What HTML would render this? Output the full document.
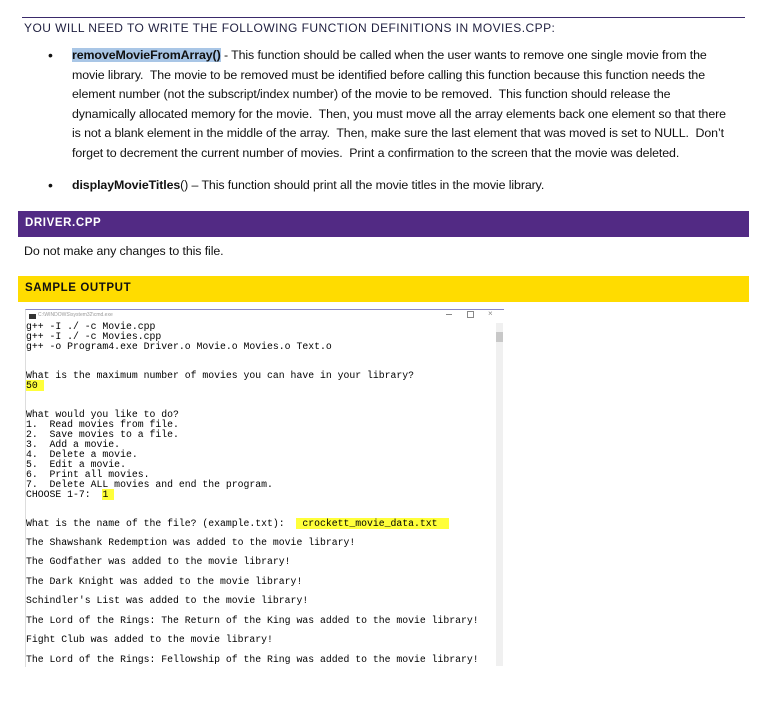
<!DOCTYPE html>
<html><head><style>
body{margin:0;background:#fff;width:777px;height:708px;position:relative;font-family:"Liberation Sans",sans-serif;color:#111;overflow:hidden}
.a{position:absolute;white-space:nowrap}
.t{font-size:12.4px;letter-spacing:-0.1px}
.m{font-family:"Liberation Mono",monospace;font-size:9.8px;color:#000;position:absolute;left:26px;white-space:pre;line-height:10px}
.hl{background:#ffff3a}
</style></head><body>
<div class="a" style="left:22px;top:17px;width:723px;height:1px;background:#3a2a6a"></div>
<div class="a" style="left:24px;top:21px;font-size:12px;letter-spacing:0.45px;color:#1f1f3f;">YOU WILL NEED TO WRITE THE FOLLOWING FUNCTION DEFINITIONS IN MOVIES.CPP:</div>
<div class="a" style="left:48px;top:47px;font-size:14px">•</div>
<div class="a t" style="left:72px;top:46px;line-height:19.6px"><b style="background:#a9c6e6">removeMovieFromArray()</b> - This function should be called when the user wants to remove one single movie from the<br>movie library.&nbsp; The movie to be removed must be identified before calling this function because this function needs the<br>element number (not the subscript/index number) of the movie to be removed.&nbsp; This function should release the<br>dynamically allocated memory for the movie.&nbsp; Then, you must move all the array elements back one element so that there<br>is not a blank element in the middle of the array.&nbsp; Then, make sure the last element that was moved is set to NULL.&nbsp; Don’t<br>forget to decrement the current number of movies.&nbsp; Print a confirmation to the screen that the movie was deleted.</div>
<div class="a" style="left:48px;top:177px;font-size:14px">•</div>
<div class="a t" style="left:72px;top:178px"><b>displayMovieTitles</b>() – This function should print all the movie titles in the movie library.</div>
<div class="a" style="left:18px;top:211px;width:731px;height:26px;background:#522a84"></div>
<div class="a" style="left:25px;top:217px;font-size:11.5px;font-weight:bold;color:#fff;letter-spacing:0.6px">DRIVER.CPP</div>
<div class="a t" style="left:24px;top:244px">Do not make any changes to this file.</div>
<div class="a" style="left:18px;top:276px;width:731px;height:26px;background:#ffdc00"></div>
<div class="a" style="left:25px;top:282px;font-size:11.5px;font-weight:bold;color:#111;letter-spacing:0.6px">SAMPLE OUTPUT</div>
<div class="a" style="left:25px;top:309px;width:478px;height:357px;border-top:1px solid #8a86c8;border-left:1px solid #ddd;background:#fff"></div>
<div class="a" style="left:29px;top:314px;width:7px;height:5px;background:#333"></div>
<div class="a" style="left:38px;top:312px;font-size:5px;color:#999">C:\WINDOWS\system32\cmd.exe</div>
<div class="a" style="left:446px;top:314px;width:6px;height:1px;background:#888"></div>
<div class="a" style="left:467px;top:311px;width:5px;height:5px;border:1px solid #888"></div>
<div class="a" style="left:488px;top:309px;font-size:8px;color:#888">×</div>
<div class="a" style="left:496px;top:323px;width:7px;height:343px;background:#f0f0f0"></div>
<div class="a" style="left:496px;top:332px;width:7px;height:10px;background:#c8c8c8"></div>
<div class="m" style="top:322px">g++ -I ./ -c Movie.cpp
g++ -I ./ -c Movies.cpp
g++ -o Program4.exe Driver.o Movie.o Movies.o Text.o</div>
<div class="m" style="top:371px">What is the maximum number of movies you can have in your library?
<span class="hl">50 </span></div>
<div class="m" style="top:410px">What would you like to do?
1.  Read movies from file.
2.  Save movies to a file.
3.  Add a movie.
4.  Delete a movie.
5.  Edit a movie.
6.  Print all movies.
7.  Delete ALL movies and end the program.
CHOOSE 1-7:  <span class="hl">1 </span></div>
<div class="m" style="top:519px">What is the name of the file? (example.txt):  <span class="hl"> crockett_movie_data.txt  </span></div>
<div class="m" style="top:538px">The Shawshank Redemption was added to the movie library!</div>
<div class="m" style="top:557px">The Godfather was added to the movie library!</div>
<div class="m" style="top:577px">The Dark Knight was added to the movie library!</div>
<div class="m" style="top:596px">Schindler's List was added to the movie library!</div>
<div class="m" style="top:616px">The Lord of the Rings: The Return of the King was added to the movie library!</div>
<div class="m" style="top:635px">Fight Club was added to the movie library!</div>
<div class="m" style="top:655px">The Lord of the Rings: Fellowship of the Ring was added to the movie library!</div>
</body></html>
